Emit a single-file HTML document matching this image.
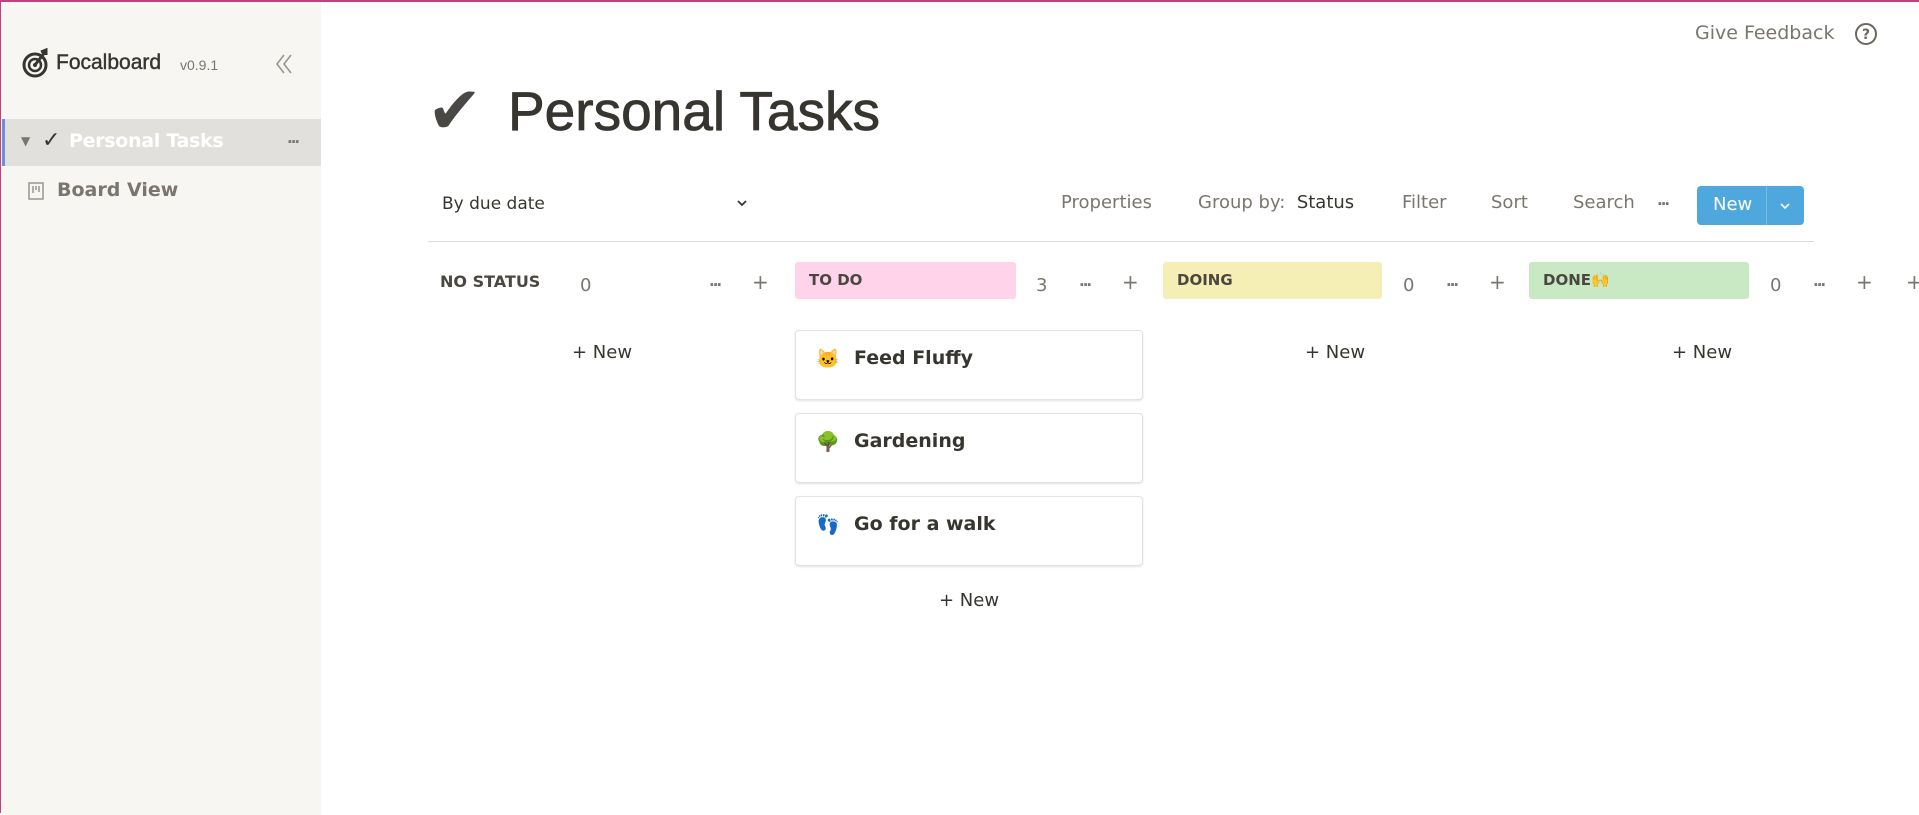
<!DOCTYPE html>
<html><head><meta charset="utf-8"><style>
*{box-sizing:border-box;margin:0;padding:0}
body{width:1919px;height:813px;overflow:hidden;background:#fff;font-family:"DejaVu Sans","Liberation Sans",sans-serif;color:#37352f;position:relative;border-top:2px solid #c2407f;border-left:1px solid #c2407f}
.a{position:absolute;white-space:nowrap}
.side{position:absolute;left:0;top:0;width:320px;height:813px;background:#f7f6f3}
.g{color:#7a766f}
.d{font-size:15px;font-weight:bold;letter-spacing:-2px}
.hdr{position:absolute;top:260px;height:37px;border-radius:3px;font-weight:bold;font-size:15px;line-height:37px;padding-left:14px;color:#4a4740}
.card{position:absolute;left:794px;width:348px;height:70px;border:1px solid #e2e2e2;border-radius:4px;box-shadow:0 1px 2px rgba(0,0,0,.12);background:#fff}
.card span{position:absolute;top:16px;font-size:19px;font-weight:bold;color:#37352f}
.card .e{left:20px;font-weight:normal;font-family:"Noto Color Emoji","DejaVu Sans",sans-serif}
.card .t{left:58px}
.new{font-size:18px;color:#37352f}
.tb{font-size:18px;color:#7a766f;top:190px}
</style></head><body>
<div class="side"></div>
<svg class="a" style="left:21px;top:46px" width="28" height="30" viewBox="0 0 28 30"><circle cx="13" cy="17" r="11" fill="none" stroke="#37352f" stroke-width="3"/><circle cx="13" cy="17" r="6" fill="none" stroke="#37352f" stroke-width="2.5"/><circle cx="13" cy="17" r="2" fill="#37352f"/><path d="M13 17 L23 4 M19 4 L24 2 L24 7" stroke="#37352f" stroke-width="3" fill="none"/></svg>
<div class="a" style="left:55px;top:49px;font-size:21px;font-family:'Liberation Sans',sans-serif;color:#37352f;-webkit-text-stroke:0.4px #37352f">Focalboard</div>
<div class="a g" style="left:179px;top:55px;font-size:14px;font-family:'Liberation Sans',sans-serif">v0.9.1</div>
<svg class="a" style="left:271px;top:50px" width="24" height="24" viewBox="0 0 24 24"><path d="M12 3 L5 12 L12 21 M19 3 L12 12 L19 21" fill="none" stroke="#9a968f" stroke-width="1.6"/></svg>
<div class="a" style="left:1px;top:117px;width:319px;height:47px;background:#e2e0dc;border-left:3px solid #6d8fd9"></div>
<div class="a g" style="left:20px;top:132px;font-size:12px">▼</div>
<div class="a" style="left:41px;top:126px;font-size:22px;color:#37352f;font-weight:bold">✓</div>
<div class="a" style="left:68px;top:128px;font-size:19px;font-weight:bold;color:#fff;letter-spacing:-0.3px">Personal Tasks</div>
<div class="a g d" style="left:286px;top:131px">···</div>
<svg class="a" style="left:27px;top:180px" width="16" height="18"><rect x="1" y="1" width="14" height="16" fill="none" stroke="#9a968f" stroke-width="1.5"/><path d="M5 4v7M8 4v4M11 4v6" stroke="#9a968f" stroke-width="1.5"/></svg>
<div class="a g" style="left:56px;top:177px;font-size:19px;font-weight:bold">Board View</div>

<div class="a g" style="left:1694px;top:20px;font-size:19px">Give Feedback</div>
<svg class="a" style="left:1853px;top:20px" width="24" height="24" viewBox="0 0 24 24"><circle cx="12" cy="12" r="10" fill="none" stroke="#6b675f" stroke-width="2"/><text x="12" y="17" font-size="14" font-weight="bold" text-anchor="middle" fill="#6b675f" font-family="DejaVu Sans">?</text></svg>

<div class="a" style="left:426px;top:70px;font-size:66px;color:#4a4845">✔</div>
<div class="a" style="left:507px;top:77px;font-size:55px;font-family:'Liberation Sans',sans-serif;color:#37352f;-webkit-text-stroke:0.8px #37352f">Personal Tasks</div>

<div class="a" style="left:441px;top:192px;font-size:17px;color:#37352f">By due date</div>
<svg class="a" style="left:735px;top:196px" width="12" height="10"><path d="M2 3 L6 7 L10 3" fill="none" stroke="#37352f" stroke-width="1.8"/></svg>
<div class="a tb" style="left:1060px">Properties</div>
<div class="a tb" style="left:1197px">Group by:&nbsp; <span style="color:#37352f">Status</span></div>
<div class="a tb" style="left:1401px">Filter</div>
<div class="a tb" style="left:1490px">Sort</div>
<div class="a tb" style="left:1572px">Search</div>
<div class="a g d" style="left:1656px;top:193px">···</div>
<div class="a" style="left:1696px;top:184px;width:107px;height:39px;background:#4ea8de;border-radius:4px"></div>
<div class="a" style="left:1765px;top:184px;width:1px;height:39px;background:#76bce6"></div>
<div class="a" style="left:1712px;top:192px;font-size:18px;color:#fff">New</div>
<svg class="a" style="left:1778px;top:199px" width="12" height="10"><path d="M2 3 L6 7 L10 3" fill="none" stroke="#fff" stroke-width="1.6"/></svg>
<div class="a" style="left:427px;top:239px;width:1386px;height:1px;background:#dcdcdc"></div>

<div class="a" style="left:439px;top:270px;font-size:16px;font-weight:bold;color:#4a4740">NO STATUS</div>
<div class="a g" style="left:579px;top:273px;font-size:18px">0</div>
<div class="a g d" style="left:708px;top:274px">···</div>
<div class="a g" style="left:751px;top:268px;font-size:20px">+</div>
<div class="hdr" style="left:794px;width:221px;background:#ffd4ea">TO DO</div>
<div class="a g" style="left:1035px;top:273px;font-size:18px">3</div>
<div class="a g d" style="left:1078px;top:274px">···</div>
<div class="a g" style="left:1121px;top:268px;font-size:20px">+</div>
<div class="hdr" style="left:1162px;width:219px;background:#f5efb5">DOING</div>
<div class="a g" style="left:1402px;top:273px;font-size:18px">0</div>
<div class="a g d" style="left:1445px;top:274px">···</div>
<div class="a g" style="left:1488px;top:268px;font-size:20px">+</div>
<div class="hdr" style="left:1528px;width:220px;background:#c9e8c4">DONE🙌</div>
<div class="a g" style="left:1769px;top:273px;font-size:18px">0</div>
<div class="a g d" style="left:1812px;top:274px">···</div>
<div class="a g" style="left:1855px;top:268px;font-size:20px">+</div>
<div class="a g" style="left:1905px;top:268px;font-size:20px">+</div>

<div class="a new" style="left:571px;top:340px">+ New</div>
<div class="a new" style="left:1304px;top:340px">+ New</div>
<div class="a new" style="left:1671px;top:340px">+ New</div>
<div class="a new" style="left:938px;top:588px">+ New</div>

<div class="card" style="top:328px"><span class="e">🐱</span><span class="t">Feed Fluffy</span></div>
<div class="card" style="top:411px"><span class="e">🌳</span><span class="t">Gardening</span></div>
<div class="card" style="top:494px"><span class="e">👣</span><span class="t">Go for a walk</span></div>
</body></html>
